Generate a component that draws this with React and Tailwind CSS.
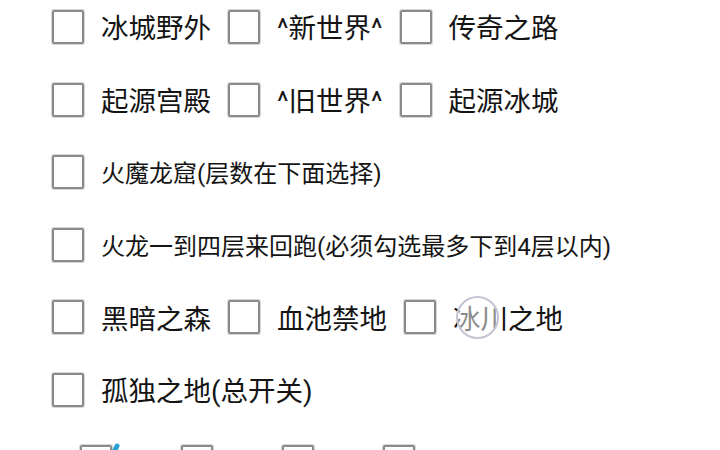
import React from 'react';

const FONT = { fontFamily: 'Roboto, "Noto Sans CJK SC", sans-serif' };

const ROWS = [
  { size: 'lg', items: ['冰城野外', '^新世界^', '传奇之路'] },
  { size: 'lg', items: ['起源宫殿', '^旧世界^', '起源冰城'] },
  { size: 'sm', items: ['火魔龙窟(层数在下面选择)'] },
  { size: 'sm', items: ['火龙一到四层来回跑(必须勾选最多下到4层以内)'] },
  { size: 'lg', items: ['黑暗之森', '血池禁地', '冰川之地'], touch: 2 },
  { size: 'lg', items: ['孤独之地(总开关)'] },
];

const Box = ({ checked }) => (
  <span className="relative w-[32px] h-[34px] flex-shrink-0 border-2 border-[#8a8a8a] rounded-[2px] shadow-[0_0_0_1px_#d6d6d6]">
    {checked && (
      <svg className="absolute -top-[4px] left-[14px] w-[24px] h-[34px]" viewBox="0 0 24 34">
        <path d="M2 20 L9 28 L21 3" fill="none" stroke="#2a9fd6" strokeWidth="5" strokeLinecap="round" />
      </svg>
    )}
  </span>
);

const Item = ({ label, size, touch }) => (
  <div className="flex items-center">
    <Box />
    <span
      className={`relative ml-[17px] mr-[17px] translate-y-[2px] text-[#141414] leading-none whitespace-nowrap ${size === 'lg' ? 'text-[27.5px]' : 'text-[24px]'}`}
    >
      {label}
      {touch && (
        <span className="absolute left-[3px] top-[-10px] w-[43px] h-[43px] rounded-full border-2 border-[#c4c4d4] bg-white/50" />
      )}
    </span>
  </div>
);

export default function App() {
  return (
    <div className="w-[720px] h-[450px] overflow-hidden bg-white" style={FONT}>
      <div className="flex flex-col gap-[38.6px] pt-[10px] pl-[52px]">
        {ROWS.map((row, i) => (
          <div key={i} className="flex items-center h-[34px]">
            {row.items.map((label, j) => (
              <Item key={j} label={label} size={row.size} touch={row.touch === j} />
            ))}
          </div>
        ))}
        <div className="flex items-center h-[34px] pl-[28px] -mt-[1px]">
          {[0, 1, 2, 3].map((i) => (
            <div key={i} className="flex items-center w-[101px]">
              <Box checked={i === 0} />
            </div>
          ))}
        </div>
      </div>
    </div>
  );
}
